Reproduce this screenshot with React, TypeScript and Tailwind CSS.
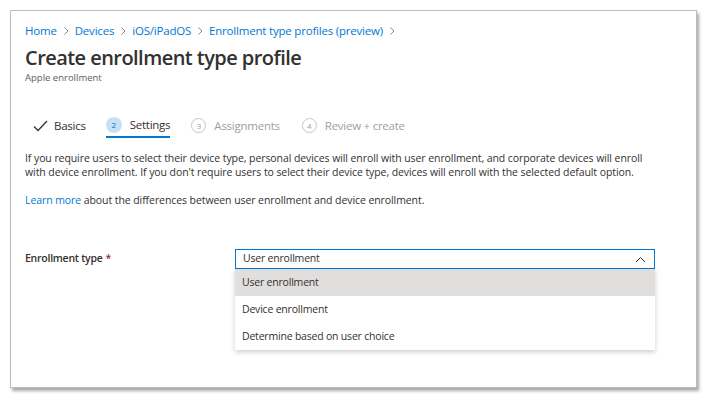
import React from "react";

function Chevron() {
  return (
    <svg width="8" height="10" viewBox="0 0 8 10" className="mx-[5px] text-[#8a8886]">
      <path d="M2.5 1.5 L6 5 L2.5 8.5" fill="none" stroke="currentColor" strokeWidth="1" />
    </svg>
  );
}

function StepCircle({ n, active }: { n: number; active?: boolean }) {
  return (
    <span
      className={
        active
          ? "w-[16px] h-[16px] rounded-full bg-[#c7e0f4] text-[#0078d4] text-[8px] flex items-center justify-center"
          : "w-[15px] h-[15px] rounded-full border border-[#c8c6c4] text-[#a19f9d] text-[8px] flex items-center justify-center"
      }
    >
      {n}
    </span>
  );
}

export default function App() {
  return (
    <div
      className="w-[712px] h-[405px] bg-white overflow-hidden pt-[10px] pl-[10px]"
      style={{ fontFamily: '"Open Sans", "Noto Sans", sans-serif' }}
    >
      <div className="w-[687px] h-[378px] bg-white border border-[#bdbdbd] shadow-[2px_3px_3px_rgba(0,0,0,0.35)] pl-[14px] pt-[11px] flex flex-col">
        {/* breadcrumb */}
        <div className="flex items-center h-[18px] text-[11.5px] text-[#0078d4] tracking-[-0.2px]">
          <span>Home</span>
          <Chevron />
          <span>Devices</span>
          <Chevron />
          <span>iOS/iPadOS</span>
          <Chevron />
          <span>Enrollment type profiles (preview)</span>
          <Chevron />
        </div>
        <div className="mt-[5px] h-[26px] leading-[26px] text-[20px] font-semibold text-[#323130] tracking-[-0.55px]">
          Create enrollment type profile
        </div>
        <div className="h-[14px] leading-[14px] text-[9.5px] text-[#605e5c]">Apple enrollment</div>

        {/* tabs */}
        <div className="mt-[28px] flex items-stretch h-[25px] text-[11.5px] tracking-[-0.25px]">
          <div className="flex items-center pl-[8px] pr-[20px]">
            <svg width="15" height="12" viewBox="0 0 15 12" className="mr-[6px]">
              <path d="M1 6.5 L5 10.5 L14 1" fill="none" stroke="#323130" strokeWidth="1.3" />
            </svg>
            <span className="text-[#323130]">Basics</span>
          </div>
          <div className="flex items-center border-b-2 border-[#0078d4] gap-[8px]">
            <StepCircle n={2} active />
            <span className="text-[#323130]">Settings</span>
          </div>
          <div className="flex items-center gap-[8px] ml-[21px]">
            <StepCircle n={3} />
            <span className="text-[#a19f9d]">Assignments</span>
          </div>
          <div className="flex items-center gap-[8px] ml-[22px]">
            <StepCircle n={4} />
            <span className="text-[#a19f9d]">Review + create</span>
          </div>
        </div>

        <p className="mt-[13px] w-[625px] text-[10.5px] leading-[14px] text-[#323130] tracking-[-0.08px]">
          If you require users to select their device type, personal devices will enroll with user enrollment, and
          corporate devices will enroll with device enrollment. If you don't require users to select their device type,
          devices will enroll with the selected default option.
        </p>
        <p className="mt-[14px] text-[10.5px] leading-[14px] text-[#323130] tracking-[-0.08px]">
          <span className="text-[#0078d4]">Learn more</span> about the differences between user enrollment and device
          enrollment.
        </p>

        {/* form row */}
        <div className="mt-[42px] flex items-start">
          <div className="w-[210px] h-[20px] flex items-center text-[10.5px] font-semibold text-[#323130] tracking-[-0.25px]">
            Enrollment type <span className="text-[#a4262c] ml-[3px]">*</span>
          </div>
          <div className="w-[420px] relative">
            <div className="h-[20px] border border-[#0078d4] flex items-center justify-between pl-[7px] pr-[8px] text-[10.5px] text-[#323130] tracking-[-0.2px]">
              <span>User enrollment</span>
              <svg width="11" height="7" viewBox="0 0 11 7">
                <path d="M1 6 L5.5 1.5 L10 6" fill="none" stroke="#323130" strokeWidth="1" />
              </svg>
            </div>
            <div className="absolute left-0 top-[20px] w-[420px] bg-white shadow-[0_2px_5px_rgba(0,0,0,0.2)] text-[10.5px] text-[#323130] tracking-[-0.2px]">
              <div className="h-[27px] flex items-center pl-[7px] pt-[1px] bg-[#e1dfdd]">User enrollment</div>
              <div className="h-[27px] flex items-center pl-[7px] pt-[1px]">Device enrollment</div>
              <div className="h-[27px] flex items-center pl-[7px] pt-[1px]">Determine based on user choice</div>
            </div>
          </div>
        </div>
      </div>
    </div>
  );
}
